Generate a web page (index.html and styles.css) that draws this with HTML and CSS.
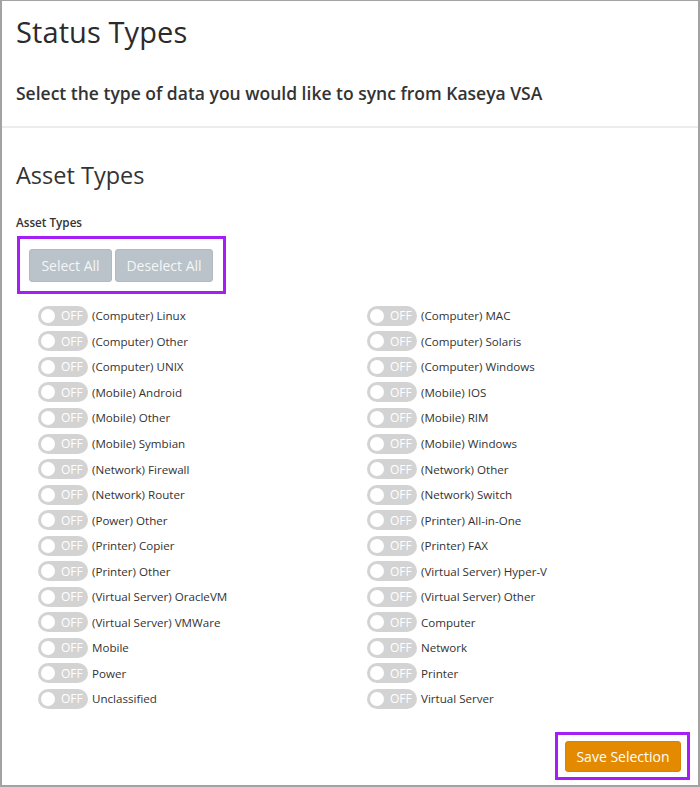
FILE: index.html
```html
<!DOCTYPE html>
<html>
<head>
<meta charset="utf-8">
<link rel="stylesheet" href="styles.css">
</head>
<body>
<div class="frame">
  <header class="head">
    <h1 class="title">Status Types</h1>
    <p class="subtitle">Select the type of data you would like to sync from Kaseya VSA</p>
  </header>
  <section class="section">
    <h2 class="section-title">Asset Types</h2>
    <div class="label">Asset Types</div>
    <div class="highlight btn-group">
      <button class="btn-gray">Select All</button>
      <button class="btn-gray">Deselect All</button>
    </div>
    <div class="grid">
      <div class="item"><span class="toggle"><span class="knob"></span>OFF</span>(Computer) Linux</div>
      <div class="item"><span class="toggle"><span class="knob"></span>OFF</span>(Computer) MAC</div>
      <div class="item"><span class="toggle"><span class="knob"></span>OFF</span>(Computer) Other</div>
      <div class="item"><span class="toggle"><span class="knob"></span>OFF</span>(Computer) Solaris</div>
      <div class="item"><span class="toggle"><span class="knob"></span>OFF</span>(Computer) UNIX</div>
      <div class="item"><span class="toggle"><span class="knob"></span>OFF</span>(Computer) Windows</div>
      <div class="item"><span class="toggle"><span class="knob"></span>OFF</span>(Mobile) Android</div>
      <div class="item"><span class="toggle"><span class="knob"></span>OFF</span>(Mobile) IOS</div>
      <div class="item"><span class="toggle"><span class="knob"></span>OFF</span>(Mobile) Other</div>
      <div class="item"><span class="toggle"><span class="knob"></span>OFF</span>(Mobile) RIM</div>
      <div class="item"><span class="toggle"><span class="knob"></span>OFF</span>(Mobile) Symbian</div>
      <div class="item"><span class="toggle"><span class="knob"></span>OFF</span>(Mobile) Windows</div>
      <div class="item"><span class="toggle"><span class="knob"></span>OFF</span>(Network) Firewall</div>
      <div class="item"><span class="toggle"><span class="knob"></span>OFF</span>(Network) Other</div>
      <div class="item"><span class="toggle"><span class="knob"></span>OFF</span>(Network) Router</div>
      <div class="item"><span class="toggle"><span class="knob"></span>OFF</span>(Network) Switch</div>
      <div class="item"><span class="toggle"><span class="knob"></span>OFF</span>(Power) Other</div>
      <div class="item"><span class="toggle"><span class="knob"></span>OFF</span>(Printer) All-in-One</div>
      <div class="item"><span class="toggle"><span class="knob"></span>OFF</span>(Printer) Copier</div>
      <div class="item"><span class="toggle"><span class="knob"></span>OFF</span>(Printer) FAX</div>
      <div class="item"><span class="toggle"><span class="knob"></span>OFF</span>(Printer) Other</div>
      <div class="item"><span class="toggle"><span class="knob"></span>OFF</span>(Virtual Server) Hyper-V</div>
      <div class="item"><span class="toggle"><span class="knob"></span>OFF</span>(Virtual Server) OracleVM</div>
      <div class="item"><span class="toggle"><span class="knob"></span>OFF</span>(Virtual Server) Other</div>
      <div class="item"><span class="toggle"><span class="knob"></span>OFF</span>(Virtual Server) VMWare</div>
      <div class="item"><span class="toggle"><span class="knob"></span>OFF</span>Computer</div>
      <div class="item"><span class="toggle"><span class="knob"></span>OFF</span>Mobile</div>
      <div class="item"><span class="toggle"><span class="knob"></span>OFF</span>Network</div>
      <div class="item"><span class="toggle"><span class="knob"></span>OFF</span>Power</div>
      <div class="item"><span class="toggle"><span class="knob"></span>OFF</span>Printer</div>
      <div class="item"><span class="toggle"><span class="knob"></span>OFF</span>Unclassified</div>
      <div class="item"><span class="toggle"><span class="knob"></span>OFF</span>Virtual Server</div>
    </div>
    <div class="footer">
      <div class="highlight save-wrap">
        <button class="btn-save">Save Selection</button>
      </div>
    </div>
  </section>
</div>
</body>
</html>
```
FILE: styles.css
```css
* { box-sizing: border-box; }
html, body { margin: 0; padding: 0; background: #fff; }
body {
  font-family: "Open Sans", "Noto Sans", sans-serif;
  color: #333;
}
.frame {
  width: 700px;
  height: 787px;
  border: 2px solid #a3a3a3;
  border-top-width: 1px;
  display: flex;
  flex-direction: column;
}
.head {
  padding: 0 14px;
  border-bottom: 2px solid #ececec;
  height: 127px;
}
.title {
  margin: 0;
  padding-top: 11px;
  font-size: 29px;
  font-weight: 400;
  line-height: 40px;
  color: #2b2b2b;
  letter-spacing: 0.1px;
}
.subtitle {
  margin: 29px 0 0;
  font-size: 17.5px;
  font-weight: 600;
  line-height: 24px;
  color: #333;
}
.section {
  padding: 0 14px;
  flex: 1;
  display: flex;
  flex-direction: column;
}
.section-title {
  margin: 30px 0 0;
  font-size: 23.5px;
  font-weight: 400;
  line-height: 34px;
  color: #333;
}
.label {
  margin-top: 22px;
  font-size: 11.7px;
  font-weight: 600;
  line-height: 16px;
  color: #333;
}
.highlight {
  border: 3px solid #a61ef5;
}
.btn-group {
  align-self: flex-start;
  margin-left: 1px;
  margin-top: 6px;
  padding: 10px 10px 9px 9px;
  display: flex;
  gap: 3px;
}
.btn-gray {
  font-family: inherit;
  background: #b9c3c9;
  color: #f4f6f7;
  border: 1px solid #b0bac0;
  border-radius: 3px;
  height: 33px;
  padding: 0;
  font-size: 14px;
  white-space: nowrap;
}
.btn-gray:first-child { width: 83px; }
.btn-gray:last-child { width: 98px; }
.grid {
  margin-top: 9px;
  padding-left: 22px;
  display: grid;
  grid-template-columns: 329px 1fr;
  grid-auto-rows: 25.55px;
}
.item {
  display: flex;
  align-items: center;
  font-size: 11.6px;
  color: #333;
  white-space: nowrap;
}
.toggle {
  display: inline-flex;
  align-items: center;
  width: 50px;
  height: 20px;
  border-radius: 10px;
  background: #d3d3d3;
  color: #fff;
  font-size: 12px;
  padding-left: 3px;
  margin-right: 4px;
  flex-shrink: 0;
}
.knob {
  width: 14px;
  height: 14px;
  border-radius: 50%;
  background: #fff;
  margin-right: 6px;
}
.footer {
  margin-top: auto;
  display: flex;
  justify-content: flex-end;
  padding-bottom: 5px;
  margin-right: -6px;
}
.save-wrap {
  padding: 6px 6px 5px 7px;
}
.btn-save {
  font-family: inherit;
  background: #e38a00;
  color: #fff;
  border: 1px solid #d98300;
  border-radius: 3px;
  height: 31px;
  width: 116px;
  font-size: 14px;
}
```
